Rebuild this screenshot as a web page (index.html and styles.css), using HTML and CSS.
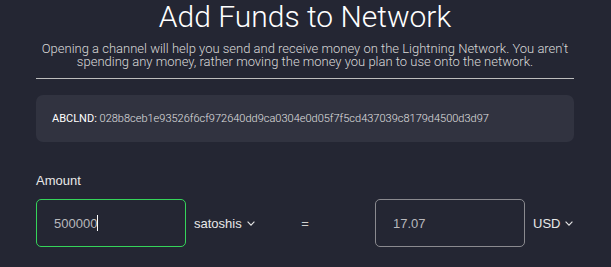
FILE: index.html
```html
<!DOCTYPE html>
<html>
<head>
<meta charset="utf-8">
<link rel="stylesheet" href="styles.css">
</head>
<body>
<div class="page">
  <h1 class="title">Add Funds to Network</h1>
  <p class="desc">Opening a channel will help you send and receive money on the Lightning Network. You aren't spending any money, rather moving the money you plan to use onto the network.</p>
  <div class="rule"></div>
  <div class="card"><span class="alias">ABCLND:</span> 028b8ceb1e93526f6cf972640dd9ca0304e0d05f7f5cd437039c8179d4500d3d97</div>
  <div class="label">Amount</div>
  <div class="row">
    <div class="field active"><span class="val">500000</span><span class="caret"></span></div>
    <div class="unit unit-sat">satoshis <svg class="chev" width="8" height="5" viewBox="0 0 8 5"><path d="M0.6 0.6 L4 4.2 L7.4 0.6" fill="none" stroke="#e6e6e6" stroke-width="1.1"/></svg></div>
    <div class="eq">=</div>
    <div class="field"><span class="val">17.07</span></div>
    <div class="unit">USD <svg class="chev" width="8" height="5" viewBox="0 0 8 5"><path d="M0.6 0.6 L4 4.2 L7.4 0.6" fill="none" stroke="#e6e6e6" stroke-width="1.1"/></svg></div>
  </div>
</div>
</body>
</html>
```
FILE: styles.css
```css
html, body {
  margin: 0;
  padding: 0;
  background: #242633;
  height: 100%;
  overflow: hidden;
}
.page {
  width: 538px;
  margin-left: 36px;
  color: #ffffff;
}
.title {
  margin: 0;
  font-family: Roboto, sans-serif;
  font-weight: 300;
  font-size: 30px;
  line-height: 34px;
  text-align: center;
  color: #ffffff;
}
.desc {
  margin: 8px -6px 0 -6px;
  font-family: Roboto, sans-serif;
  font-weight: 300;
  font-size: 13px;
  line-height: 13px;
  text-align: center;
  color: #d9d9d9;
}
.rule {
  margin-top: 10px;
  height: 1px;
  background: #bdbdbd;
}
.card {
  margin-top: 16px;
  height: 47px;
  box-sizing: border-box;
  padding-left: 16px;
  background: #313340;
  border-radius: 7px;
  display: flex;
  align-items: center;
  font-family: Roboto, sans-serif;
  font-weight: 300;
  font-size: 11px;
  color: #e0e0e0;
  white-space: pre;
}
.alias {
  font-weight: 400;
  color: #ffffff;
}
.label {
  margin-top: 31px;
  font-family: "Liberation Sans", Arial, sans-serif;
  font-size: 13px;
  line-height: 16px;
  color: #e8e8e8;
}
.row {
  margin-top: 10px;
  display: flex;
  align-items: center;
  font-family: "Liberation Sans", Arial, sans-serif;
  font-size: 13px;
}
.field {
  width: 150px;
  height: 48px;
  box-sizing: border-box;
  border: 1px solid #8a8a8f;
  border-radius: 5px;
  display: flex;
  align-items: center;
  padding-left: 17px;
  color: #b8b8bc;
}
.field.active {
  border-color: #35d45a;
}
.caret {
  display: inline-block;
  width: 1px;
  height: 16px;
  background: #ffffff;
  margin-left: 0;
}
.unit {
  margin-left: 8px;
  display: flex;
  align-items: center;
  color: #e8e8e8;
}
.unit-sat {
  width: 101px;
}
.chev {
  margin-left: 5px;
  margin-top: 1px;
}
.eq {
  width: 20px;
  text-align: center;
  color: #cfcfcf;
  margin-right: 60px;
}
```
